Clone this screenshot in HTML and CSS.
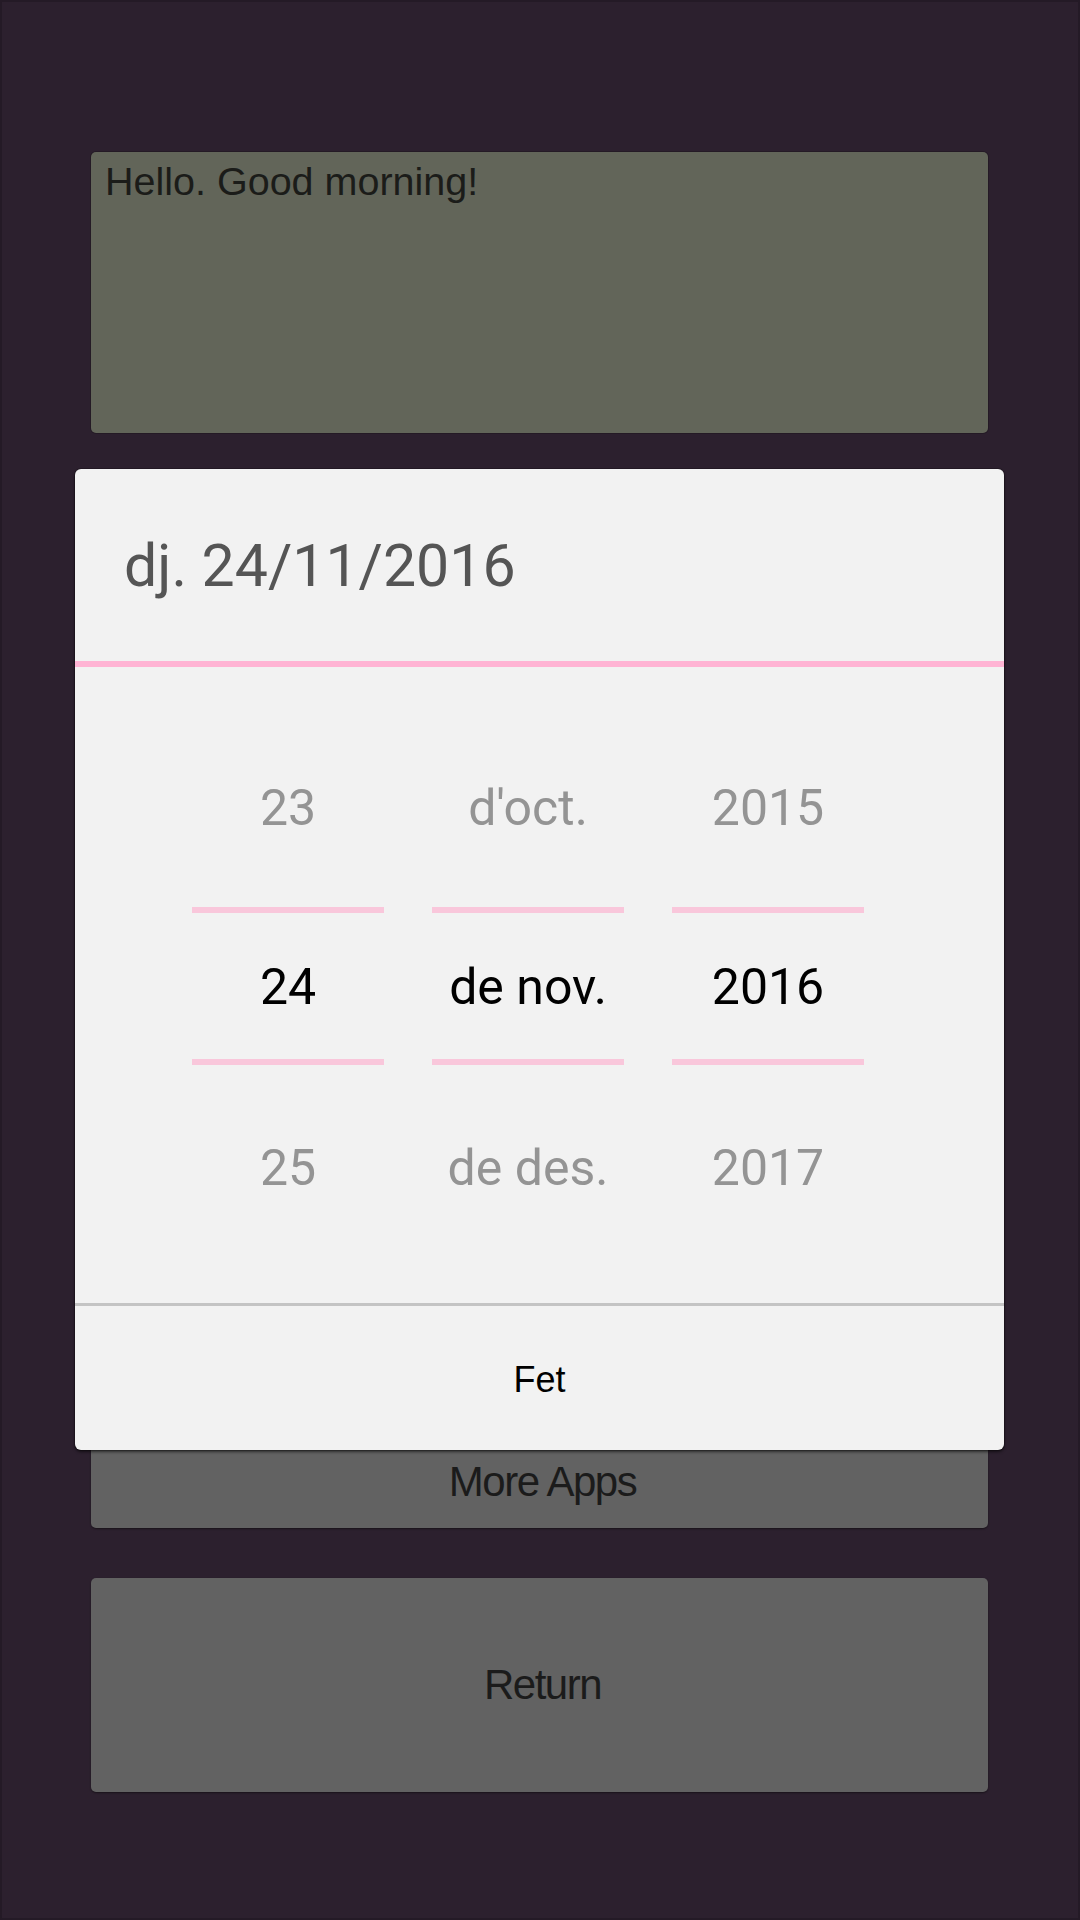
FILE: index.html
```html
<!DOCTYPE html>
<html>
<head>
<meta charset="utf-8">
<link rel="stylesheet" href="styles.css">
</head>
<body>
<div class="screen">
  <div class="note">Hello. Good morning!</div>
  <div class="btn btn-more">More Apps</div>
  <div class="btn btn-return">Return</div>
</div>

<div class="dialog">
  <div class="dialog-header">dj. 24/11/2016</div>
  <div class="accent-line"></div>
  <div class="picker">
    <div class="column">
      <div class="item item-prev">23</div>
      <div class="item item-current">24</div>
      <div class="item item-next">25</div>
    </div>
    <div class="column">
      <div class="item item-prev">d'oct.</div>
      <div class="item item-current">de nov.</div>
      <div class="item item-next">de des.</div>
    </div>
    <div class="column">
      <div class="item item-prev">2015</div>
      <div class="item item-current">2016</div>
      <div class="item item-next">2017</div>
    </div>
  </div>
  <div class="divider"></div>
  <div class="dialog-footer">Fet</div>
</div>
</body>
</html>
```
FILE: styles.css
```css
html, body {
  margin: 0;
  padding: 0;
}

body {
  width: 1080px;
  height: 1920px;
  background: #2c202e;
  box-shadow: inset 0 0 0 2px #241a26;
  position: relative;
  overflow: hidden;
  font-family: "Liberation Sans", Arial, sans-serif;
}

.screen {
  display: flex;
  flex-direction: column;
  padding: 152px 92px 0 91px;
}

.note {
  height: 281px;
  box-sizing: border-box;
  background: #626559;
  border-radius: 5px;
  box-shadow: 0 0 0 1px rgba(0, 0, 0, 0.18);
  padding: 7px 14px;
  font-size: 39.5px;
  line-height: 45px;
  color: #1b1c19;
}

.btn {
  background: #626262;
  border-radius: 5px;
  box-shadow: 0 1px 2px rgba(0, 0, 0, 0.45);
  display: flex;
  align-items: center;
  justify-content: center;
  color: #1b1b1b;
  font-size: 42px;
  letter-spacing: -1.5px;
  padding-left: 6px;
}

.btn-more {
  margin-top: 1003px;
  height: 92px;
}

.btn-return {
  margin-top: 50px;
  height: 214px;
}

/* dialog overlay */
.dialog {
  position: absolute;
  left: 75px;
  top: 469px;
  width: 929px;
  height: 981px;
  background: #f2f2f2;
  border-radius: 6px;
  box-shadow: 0 0 0 1px rgba(0, 0, 0, 0.2), 0 2px 3px rgba(0, 0, 0, 0.55);
  display: flex;
  flex-direction: column;
  overflow: hidden;
}

.dialog-header {
  height: 192px;
  display: flex;
  align-items: center;
  padding-left: 49px;
  font-family: Roboto, "Noto Sans", sans-serif;
  font-size: 59px;
  color: #555555;
}

.accent-line {
  height: 6px;
  background: #ffb4d4;
}

.picker {
  height: 636px;
  box-sizing: border-box;
  padding: 34px 0 0 117px;
  display: grid;
  grid-template-columns: repeat(3, 192px);
  column-gap: 48px;
  align-content: start;
}

.column {
  display: flex;
  flex-direction: column;
}

.item {
  display: flex;
  align-items: center;
  justify-content: center;
  font-family: Roboto, "Noto Sans", sans-serif;
  font-size: 50px;
  color: #949494;
}

.item-prev {
  height: 206px;
  box-sizing: border-box;
  padding-top: 8px;
}

.item-current {
  height: 144px;
  border-top: 6px solid #f9c7db;
  border-bottom: 6px solid #f9c7db;
  color: #000000;
  padding-top: 2px;
}

.item-next {
  height: 206px;
}

.divider {
  height: 3px;
  background: #c4c4c4;
}

.dialog-footer {
  flex: 1;
  display: flex;
  align-items: center;
  justify-content: center;
  font-size: 36px;
  color: #000000;
  padding-top: 4px;
}
```
